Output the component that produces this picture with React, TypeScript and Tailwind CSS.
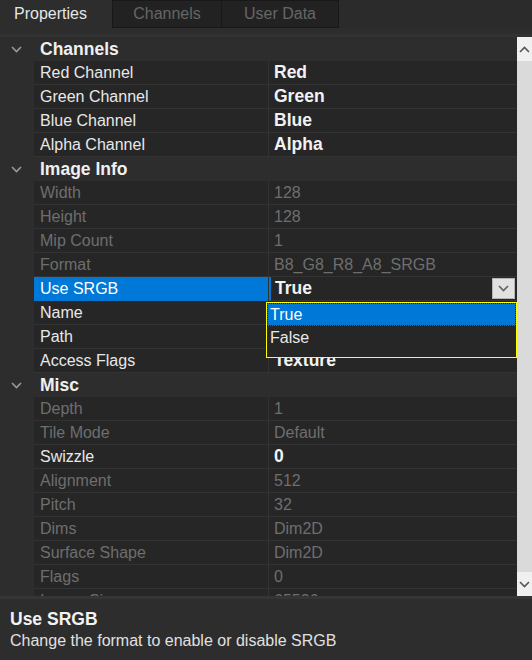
import React from 'react';

type Row =
  | { kind: 'header'; label: string }
  | { kind: 'prop'; name: string; value: string; enabled: boolean; selected?: boolean };

const rows: Row[] = [
  { kind: 'header', label: 'Channels' },
  { kind: 'prop', name: 'Red Channel', value: 'Red', enabled: true },
  { kind: 'prop', name: 'Green Channel', value: 'Green', enabled: true },
  { kind: 'prop', name: 'Blue Channel', value: 'Blue', enabled: true },
  { kind: 'prop', name: 'Alpha Channel', value: 'Alpha', enabled: true },
  { kind: 'header', label: 'Image Info' },
  { kind: 'prop', name: 'Width', value: '128', enabled: false },
  { kind: 'prop', name: 'Height', value: '128', enabled: false },
  { kind: 'prop', name: 'Mip Count', value: '1', enabled: false },
  { kind: 'prop', name: 'Format', value: 'B8_G8_R8_A8_SRGB', enabled: false },
  { kind: 'prop', name: 'Use SRGB', value: 'True', enabled: true, selected: true },
  { kind: 'prop', name: 'Name', value: '', enabled: true },
  { kind: 'prop', name: 'Path', value: '', enabled: true },
  { kind: 'prop', name: 'Access Flags', value: 'Texture', enabled: true },
  { kind: 'header', label: 'Misc' },
  { kind: 'prop', name: 'Depth', value: '1', enabled: false },
  { kind: 'prop', name: 'Tile Mode', value: 'Default', enabled: false },
  { kind: 'prop', name: 'Swizzle', value: '0', enabled: true },
  { kind: 'prop', name: 'Alignment', value: '512', enabled: false },
  { kind: 'prop', name: 'Pitch', value: '32', enabled: false },
  { kind: 'prop', name: 'Dims', value: 'Dim2D', enabled: false },
  { kind: 'prop', name: 'Surface Shape', value: 'Dim2D', enabled: false },
  { kind: 'prop', name: 'Flags', value: '0', enabled: false },
  { kind: 'prop', name: 'Image Size', value: '65536', enabled: false },
];

function Chevron({ up = false, className = '' }: { up?: boolean; className?: string }) {
  return (
    <svg width="11" height="7" viewBox="0 0 11 7" className={className}>
      <polyline
        points={up ? '1,6 5.5,1.5 10,6' : '1,1 5.5,5.5 10,1'}
        fill="none"
        stroke="currentColor"
        strokeWidth="1.6"
      />
    </svg>
  );
}

export default function App() {
  return (
    <div
      className="w-[532px] h-[660px] bg-[#2b2b2b] flex flex-col overflow-hidden select-none"
      style={{ fontFamily: '"Liberation Sans", Arial, sans-serif' }}
    >
      {/* Tabs */}
      <div className="flex h-[28px] shrink-0 bg-[#2b2b2b]">
        <div className="w-[112px] flex items-center pl-[14px] text-[16px] text-[#e6e6e6] bg-[#2d2d2d]">
          Properties
        </div>
        <div className="w-[110px] flex items-center justify-center text-[16px] text-[#666666] bg-[#222222] border border-[#181818]">
          Channels
        </div>
        <div className="w-[117px] flex items-center justify-center text-[16px] text-[#666666] bg-[#222222] border border-l-0 border-[#181818]">
          User Data
        </div>
      </div>
      <div className="h-[9px] shrink-0 bg-[#2d2d2d] border-b-[3px] border-[#323232]" />

      {/* Grid */}
      <div className="relative flex h-[559px] shrink-0">
        <div className="flex-1 overflow-hidden bg-[#2d2d2d]">
          {rows.map((r, i) =>
            r.kind === 'header' ? (
              <div key={i} className="flex h-[24px] items-center bg-[#2d2d2d]">
                <div className="w-[33px] flex justify-center text-[#9a9a9a]">
                  <Chevron />
                </div>
                <span className="pl-[7px] text-[17.5px] font-bold text-[#f0f0f0]">{r.label}</span>
              </div>
            ) : (
              <div key={i} className="flex h-[24px]">
                <div className="w-[34px] shrink-0 bg-[#2d2d2d]" />
                <div
                  className={
                    r.selected
                      ? 'w-[234px] shrink-0 flex items-center pl-[6px] text-[16px] text-white bg-[#0078d7] border-b border-[#0078d7]'
                      : r.enabled
                        ? 'w-[234px] shrink-0 flex items-center pl-[6px] text-[16px] text-[#e8e8e8] bg-[#262626] border-b border-[#333333]'
                        : 'w-[234px] shrink-0 flex items-center pl-[6px] text-[16px] text-[#6e6e6e] bg-[#262626] border-b border-[#333333]'
                  }
                >
                  {r.name}
                </div>
                <div className="w-px shrink-0 bg-[#333333]" />
                <div
                  className={
                    r.selected
                      ? 'flex-1 flex items-center pl-[4px] bg-[#262626] border-b border-[#333333] border-l-2 border-l-[#0078d7]'
                      : 'flex-1 flex items-center pl-[5px] bg-[#262626] border-b border-[#333333]'
                  }
                >
                  <span
                    className={
                      r.enabled
                        ? 'text-[17.5px] font-bold text-[#f2f2f2]'
                        : 'text-[16px] text-[#6e6e6e]'
                    }
                  >
                    {r.value}
                  </span>
                  {r.selected && (
                    <div className="ml-auto mr-[2px] w-[23px] h-[21px] bg-[#e1e1e1] border border-[#b5b5b5] flex items-center justify-center text-[#606060]">
                      <Chevron />
                    </div>
                  )}
                </div>
              </div>
            )
          )}
        </div>

        {/* Scrollbar */}
        <div className="w-[15px] shrink-0 bg-[#dadada] flex flex-col justify-between">
          <div className="h-[24px] bg-[#f0f0f0] flex items-center justify-center text-[#555555]">
            <Chevron up />
          </div>
          <div className="h-[24px] bg-[#f0f0f0] flex items-center justify-center text-[#555555]">
            <Chevron />
          </div>
        </div>

        {/* Dropdown list */}
        <div className="absolute left-[266px] top-[265px] w-[251px] h-[56px] bg-[#262626] border border-[#ffff00]">
          <div className="h-[23px] flex items-center pl-[2px] text-[16px] text-white bg-[#0078d7] border border-dotted border-[#1a1a1a]">
            True
          </div>
          <div className="h-[23px] flex items-center pl-[3px] text-[16px] text-[#e8e8e8]">False</div>
        </div>
      </div>

      {/* Description footer */}
      <div className="flex-1 border-t-[3px] border-[#353535] bg-[#2d2d2d] px-[10px] pt-[9px]">
        <div className="text-[17.5px] font-bold text-[#f2f2f2] leading-[22px]">Use SRGB</div>
        <div className="text-[16px] text-[#e0e0e0] leading-[22px]">
          Change the format to enable or disable SRGB
        </div>
      </div>
    </div>
  );
}
